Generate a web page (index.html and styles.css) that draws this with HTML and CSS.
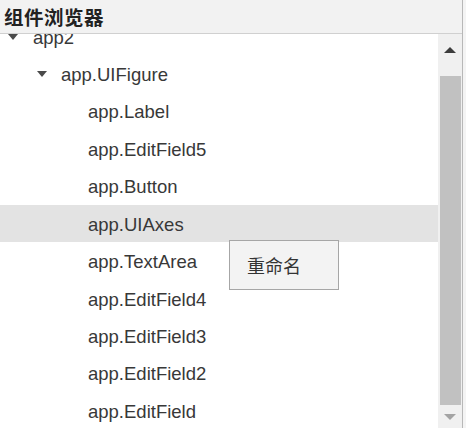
FILE: index.html
```html
<!DOCTYPE html>
<html lang="zh">
<head>
<meta charset="utf-8">
<title>组件浏览器</title>
<link rel="stylesheet" href="styles.css">
</head>
<body>
<div class="page">
  <div class="panel">
    <div class="header"><span class="title">组件浏览器</span></div>
    <div class="body">
      <div class="tree">
        <ul class="list">
          <li class="row lvl0"><svg class="caret" viewBox="0 0 10 6"><path d="M0 0H10L5 6Z"/></svg><span>app2</span></li>
          <li class="row lvl1"><svg class="caret" viewBox="0 0 10 6"><path d="M0 0H10L5 6Z"/></svg><span>app.UIFigure</span></li>
          <li class="row leaf"><span>app.Label</span></li>
          <li class="row leaf"><span>app.EditField5</span></li>
          <li class="row leaf"><span>app.Button</span></li>
          <li class="row leaf selected"><span>app.UIAxes</span></li>
          <li class="row leaf"><span>app.TextArea</span></li>
          <li class="row leaf"><span>app.EditField4</span></li>
          <li class="row leaf"><span>app.EditField3</span></li>
          <li class="row leaf"><span>app.EditField2</span></li>
          <li class="row leaf"><span>app.EditField</span></li>
        </ul>
      </div>
      <div class="scrollbar">
        <div class="sb-btn sb-up"><svg class="arrow" viewBox="0 0 12 6"><path d="M0 6H12L6 0Z"/></svg></div>
        <div class="sb-gap"></div>
        <div class="sb-thumb"></div>
        <div class="sb-btn sb-down"><svg class="arrow" viewBox="0 0 12 6"><path d="M0 0H12L6 6Z"/></svg></div>
      </div>
      <div class="menu"><span class="menu-item">重命名</span></div>
    </div>
  </div>
  <div class="edge"></div>
</div>
</body>
</html>
```

FILE: styles.css
```css
html, body {
  margin: 0;
  padding: 0;
  width: 466px;
  height: 428px;
  overflow: hidden;
  background: #ffffff;
  font-family: "Liberation Sans", Arial, "Noto Sans CJK SC", sans-serif;
}

.page {
  display: flex;
  width: 466px;
  height: 428px;
}

.panel {
  width: 462px;
  height: 428px;
  display: flex;
  flex-direction: column;
  background: #ffffff;
}

.header {
  height: 33px;
  flex: none;
  display: flex;
  align-items: center;
  padding-left: 4px;
  background: #f2f2f2;
  border-bottom: 1px solid #d0d0d0;
}

.title {
  font-family: "Noto Sans CJK SC", "Liberation Sans", sans-serif;
  font-weight: 700;
  font-size: 19.5px;
  color: #222222;
  letter-spacing: 0.5px;
}

.body {
  position: relative;
  flex: 1;
  display: flex;
  min-height: 0;
}

.tree {
  flex: 1;
  overflow: hidden;
}

.list {
  list-style: none;
  margin: -16.2px 0 0 0;
  padding: 0;
}

.row {
  height: 37.44px;
  box-sizing: border-box;
  padding-top: 2px;
  display: flex;
  align-items: center;
  font-size: 18.5px;
  color: #383838;
  white-space: nowrap;
}

.row.lvl0 { padding-left: 8px; }
.row.lvl1 { padding-left: 37px; }
.row.leaf { padding-left: 88px; }

.row.selected { background: #e3e3e3; }

.caret {
  width: 10px;
  height: 6px;
  flex: none;
  margin-right: 15px;
  margin-top: -2px;
  fill: #4a4a4a;
}

.row.lvl1 .caret { margin-right: 14px; }

.scrollbar {
  width: 24px;
  flex: none;
  display: flex;
  flex-direction: column;
  background: #f0f0f0;
}

.sb-btn {
  display: flex;
  align-items: center;
  justify-content: center;
  flex: none;
}

.sb-up { height: 32px; }
.sb-gap { height: 10px; flex: none; }
.sb-down { height: 23px; }

.sb-thumb {
  flex: 1;
  margin: 0 1px 0 2px;
  background: #c1c1c1;
}

.arrow {
  width: 12px;
  height: 6px;
}

.sb-up .arrow { fill: #3c3c3c; }
.sb-down .arrow { fill: #a3a3a3; }

.menu {
  position: absolute;
  left: 229px;
  top: 206px;
  width: 110px;
  height: 50px;
  box-sizing: border-box;
  border: 1px solid #a6a6a6;
  background: #f3f3f3;
  display: flex;
  align-items: center;
  padding-left: 17px;
}

.menu-item {
  font-family: "Noto Sans CJK SC", "Liberation Sans", sans-serif;
  font-size: 18px;
  color: #333333;
}

.edge {
  width: 4px;
  height: 428px;
  box-sizing: border-box;
  border-left: 1px solid #b8b8b8;
  background: #f4f4f4;
}
```
